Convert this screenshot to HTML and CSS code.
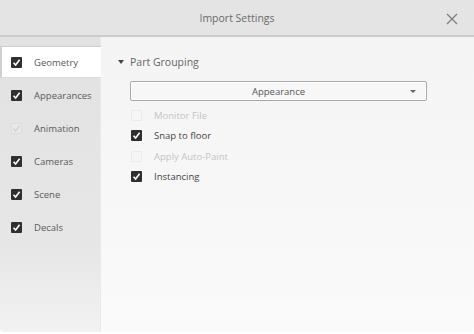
FILE: index.html
```html
<!DOCTYPE html>
<html>
<head>
<meta charset="utf-8">
<link rel="stylesheet" href="styles.css">
</head>
<body>
<div class="window">
  <header class="titlebar">
    <span class="title">Import Settings</span>
    <svg class="close" width="12" height="12" viewBox="0 0 12 12"><path d="M1 1L11 11M11 1L1 11" stroke="#7a7a7a" stroke-width="1.2" fill="none"/></svg>
  </header>
  <div class="body">
    <nav class="sidebar">
      <div class="nav-item active"><span class="cb on"><svg viewBox="0 0 11 11"><path d="M2.5 5.8L4.6 8L8.6 2.8" stroke="#fff" stroke-width="1.6" fill="none"/></svg></span><span>Geometry</span></div>
      <div class="nav-item"><span class="cb on"><svg viewBox="0 0 11 11"><path d="M2.5 5.8L4.6 8L8.6 2.8" stroke="#fff" stroke-width="1.6" fill="none"/></svg></span><span>Appearances</span></div>
      <div class="nav-item"><span class="cb dis"><svg viewBox="0 0 11 11"><path d="M2.5 5.8L4.6 8L8.6 2.8" stroke="#d2d2d2" stroke-width="1.6" fill="none"/></svg></span><span>Animation</span></div>
      <div class="nav-item"><span class="cb on"><svg viewBox="0 0 11 11"><path d="M2.5 5.8L4.6 8L8.6 2.8" stroke="#fff" stroke-width="1.6" fill="none"/></svg></span><span>Cameras</span></div>
      <div class="nav-item"><span class="cb on"><svg viewBox="0 0 11 11"><path d="M2.5 5.8L4.6 8L8.6 2.8" stroke="#fff" stroke-width="1.6" fill="none"/></svg></span><span>Scene</span></div>
      <div class="nav-item"><span class="cb on"><svg viewBox="0 0 11 11"><path d="M2.5 5.8L4.6 8L8.6 2.8" stroke="#fff" stroke-width="1.6" fill="none"/></svg></span><span>Decals</span></div>
    </nav>
    <main class="content">
      <div class="section-head"><span class="tri"></span><span>Part Grouping</span></div>
      <div class="select"><span>Appearance</span><span class="sel-arrow"></span></div>
      <div class="opt disabled"><span class="cb empty"></span><span>Monitor File</span></div>
      <div class="opt"><span class="cb on"><svg viewBox="0 0 11 11"><path d="M2.5 5.8L4.6 8L8.6 2.8" stroke="#fff" stroke-width="1.6" fill="none"/></svg></span><span>Snap to floor</span></div>
      <div class="opt disabled"><span class="cb empty"></span><span>Apply Auto-Paint</span></div>
      <div class="opt"><span class="cb on"><svg viewBox="0 0 11 11"><path d="M2.5 5.8L4.6 8L8.6 2.8" stroke="#fff" stroke-width="1.6" fill="none"/></svg></span><span>Instancing</span></div>
    </main>
  </div>
</div>
</body>
</html>
```
FILE: styles.css
```css
* { box-sizing: border-box; }
html, body { margin: 0; padding: 0; }
body {
  width: 474px;
  height: 334px;
  background: #ffffff;
  font-family: "Open Sans", "Liberation Sans", sans-serif;
  color: #555;
  overflow: hidden;
}
.window {
  width: 474px;
  height: 332px;
  display: flex;
  flex-direction: column;
  border-radius: 0 0 4px 4px;
  overflow: hidden;
}
.titlebar {
  height: 37px;
  flex: none;
  background: #e4e4e4;
  border-bottom: 2px solid #cbcbcb;
  display: flex;
  align-items: center;
  justify-content: center;
  position: relative;
}
.title {
  font-size: 10.5px;
  color: #6a6a6a;
  margin-top: 1px;
}
.close {
  position: absolute;
  right: 16px;
  top: 13px;
}
.body {
  flex: 1;
  display: flex;
  min-height: 0;
}
.sidebar {
  width: 101px;
  flex: none;
  background: linear-gradient(#e2e2e2 0%, #e6e6e6 70%, #f2f2f2 100%);
  border-right: 1px solid #e9e9e9;
  padding-top: 9px;
  display: flex;
  flex-direction: column;
}
.nav-item {
  height: 33px;
  display: flex;
  align-items: center;
  padding-left: 11px;
  gap: 12px;
  font-size: 9.5px;
  color: #5a5a5a;
}
.nav-item.active {
  background: #ffffff;
  border-top: 1px solid #cfcfcf;
  border-bottom: 1px solid #dcdcdc;
  border-left: 2px solid #d0d0d0;
  padding-left: 9px;
  margin-right: -1px;
  height: 32px;
  margin-bottom: 1px;
}
.cb {
  width: 11px;
  height: 11px;
  flex: none;
  display: inline-flex;
  border-radius: 1px;
}
.cb svg { width: 11px; height: 11px; }
.cb.on { background: #2f2f2f; }
.cb.dis { background: #e9e9e9; border: 1px solid #dcdcdc; }
.cb.dis svg { margin: -1px; }
.cb.empty { background: #f6f6f6; border: 1px solid #ebebeb; }
.content {
  flex: 1;
  background: linear-gradient(#f4f4f4, #fafafa);
  padding: 17px 47px 0 17px;
  display: flex;
  flex-direction: column;
}
.section-head {
  display: flex;
  align-items: center;
  font-size: 10.5px;
  color: #666;
  height: 16px;
}
.tri {
  width: 0;
  height: 0;
  border-left: 3px solid transparent;
  border-right: 3px solid transparent;
  border-top: 4px solid #444;
  margin-right: 6px;
}
.select {
  margin-top: 11px;
  margin-left: 12px;
  height: 20px;
  border: 1px solid #a9a9a9;
  border-radius: 2px;
  background: #f7f7f7;
  box-shadow: inset 0 0 0 1px #ffffff;
  display: flex;
  align-items: center;
  justify-content: center;
  position: relative;
  font-size: 9.5px;
  color: #555;
}
.sel-arrow {
  position: absolute;
  right: 10px;
  top: 8px;
  width: 0;
  height: 0;
  border-left: 3px solid transparent;
  border-right: 3px solid transparent;
  border-top: 3px solid #666;
}
.opt {
  margin-left: 13px;
  height: 20.5px;
  display: flex;
  align-items: center;
  gap: 12px;
  font-size: 9.5px;
  color: #444;
}
.select + .opt { margin-top: 4px; }
.opt.disabled { color: #c4c4c4; }
```
